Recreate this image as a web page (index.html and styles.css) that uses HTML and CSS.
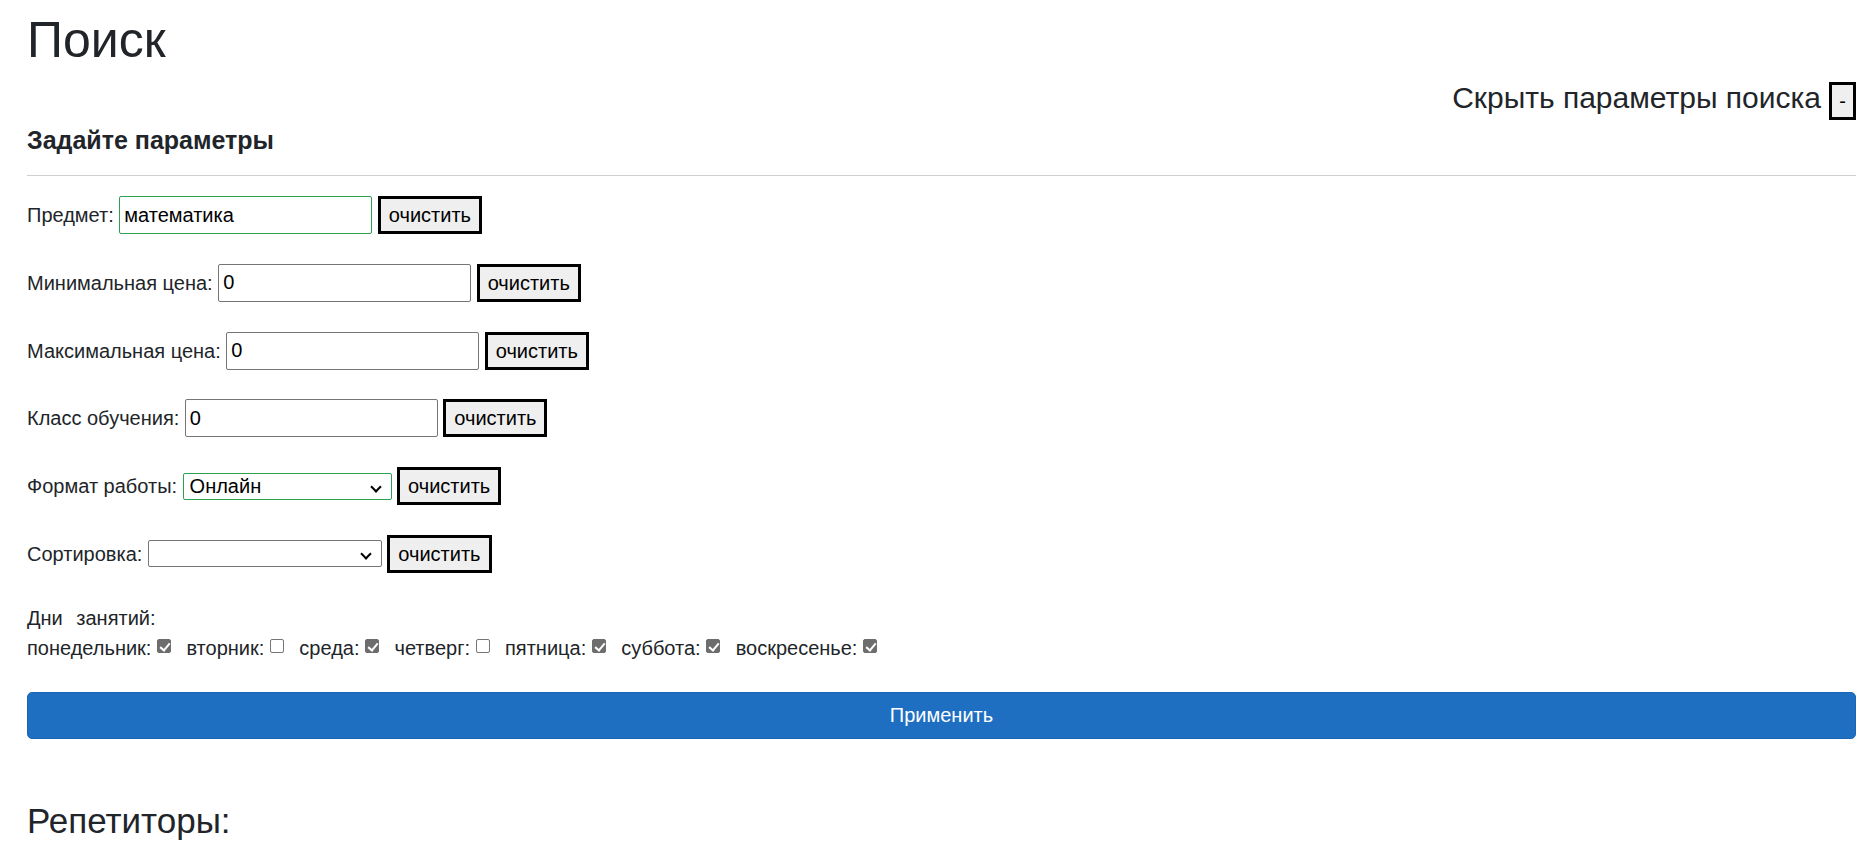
FILE: index.html
```html
<!DOCTYPE html>
<html lang="ru">
<head>
<meta charset="utf-8">
<title>Поиск</title>
<link rel="stylesheet" href="styles.css">
</head>
<body>
<div class="page">
  <h1 class="title">Поиск</h1>
  <div class="toggle">Скрыть параметры поиска <button type="button" class="btn-plain btn-small">-</button></div>
  <h5 class="section-title">Задайте параметры</h5>
  <hr class="divider">
  <form class="filters">
    <div class="field"><label>Предмет:</label><input class="text-input valid" type="text" value="математика"><button type="button" class="btn-plain">очистить</button></div>
    <div class="field"><label>Минимальная цена:</label><input class="text-input" type="text" value="0"><button type="button" class="btn-plain">очистить</button></div>
    <div class="field"><label>Максимальная цена:</label><input class="text-input" type="text" value="0"><button type="button" class="btn-plain">очистить</button></div>
    <div class="field"><label>Класс обучения:</label><input class="text-input" type="text" value="0"><button type="button" class="btn-plain">очистить</button></div>
    <div class="field"><label>Формат работы:</label><span class="select-wrap"><select class="select select-format valid"><option>Онлайн</option><option>Оффлайн</option></select></span><button type="button" class="btn-plain">очистить</button></div>
    <div class="field"><label>Сортировка:</label><span class="select-wrap"><select class="select select-sort"><option></option><option>по цене (возрастание)</option></select></span><button type="button" class="btn-plain">очистить</button></div>
    <div class="days">
      <div class="days-title">Дни <span class="days-title-2">занятий:</span></div>
      <div class="days-list"><span>понедельник:</span><input class="cb" type="checkbox" checked disabled><span class="day">вторник:</span><input class="cb" type="checkbox" disabled><span class="day">среда:</span><input class="cb" type="checkbox" checked disabled><span class="day">четверг:</span><input class="cb" type="checkbox" disabled><span class="day">пятница:</span><input class="cb" type="checkbox" checked disabled><span class="day">суббота:</span><input class="cb" type="checkbox" checked disabled><span class="day">воскресенье:</span><input class="cb" type="checkbox" checked disabled></div>
    </div>
    <button type="button" class="btn-apply">Применить</button>
  </form>
  <h3 class="results-title">Репетиторы:</h3>
</div>
</body>
</html>
```
FILE: styles.css
```css
* {
  box-sizing: border-box;
}

html, body {
  margin: 0;
  background: #fff;
}

body {
  font-family: "Liberation Sans", Arial, sans-serif;
  font-size: 20px;
  line-height: 1.5;
  color: #212529;
}

.page {
  padding: 10px 17px 0 27px;
}

.title {
  margin: 0 0 10px;
  font-size: 50px;
  font-weight: 400;
  line-height: 1.2;
}

.toggle {
  text-align: right;
  font-size: 30px;
  line-height: 36px;
}

.btn-plain {
  font-family: "Liberation Sans", Arial, sans-serif;
  font-size: 20px;
  font-weight: 400;
  line-height: 30px;
  height: 38px;
  padding: 1px 8px;
  margin: 0;
  border: 3px solid #000;
  border-radius: 0;
  background: #efefef;
  color: #000;
  vertical-align: baseline;
}

.btn-small {
  padding: 1px 7px;
}

.section-title {
  margin: 5px 0 10px;
  font-size: 25px;
  font-weight: 700;
  line-height: 1.2;
}

.divider {
  margin: 20px 0;
  height: 0;
  border: 0;
  border-top: 1px solid #cfcfcf;
}

.filters {
  margin: 0;
}

.field {
  display: flex;
  align-items: center;
  gap: 5.5px;
  height: 38px;
  margin-bottom: 29.75px;
  line-height: 30px;
}

.text-input {
  width: 253px;
  height: 38px;
  margin: 0;
  padding: 0 4px;
  border: 1px solid #767676;
  border-radius: 2px;
  font-family: "Liberation Sans", Arial, sans-serif;
  font-size: 20px;
  color: #000;
  background: #fff;
}

.text-input.valid,
.select.valid {
  border: 1.5px solid #2f9f50;
}

.select-wrap {
  position: relative;
  display: inline-block;
  height: 27px;
}

.select-wrap::after {
  content: "";
  position: absolute;
  right: 12px;
  top: 10px;
  width: 6px;
  height: 6px;
  border-right: 2px solid #000;
  border-bottom: 2px solid #000;
  transform: rotate(45deg);
  pointer-events: none;
}

.select {
  -webkit-appearance: none;
  appearance: none;
  display: block;
  height: 27px;
  margin: 0;
  padding: 0 26px 0 6px;
  border: 1px solid #767676;
  border-radius: 2px;
  background: #fff;
  font-family: "Liberation Sans", Arial, sans-serif;
  font-size: 20px;
  line-height: 23px;
  color: #000;
}

.select-format {
  width: 209px;
}

.select-sort {
  width: 234px;
}

.days {
  margin-bottom: 29px;
  line-height: 30px;
}

.days-title-2 {
  margin-left: 8px;
}

.days-list {
  white-space: nowrap;
}

.cb {
  -webkit-appearance: none;
  appearance: none;
  position: relative;
  display: inline-block;
  width: 14px;
  height: 14px;
  margin: 0 0 1.5px 5.5px;
  vertical-align: baseline;
  border: 1px solid #767676;
  border-radius: 2px;
  background: #fff;
}

.cb:checked {
  background: #6d6d6d;
  border-color: #6d6d6d;
}

.cb:checked::after {
  content: "";
  position: absolute;
  left: 4px;
  top: 1px;
  width: 4px;
  height: 8px;
  border-right: 2px solid #fff;
  border-bottom: 2px solid #fff;
  transform: rotate(40deg);
}

.day {
  margin-left: 15.5px;
}

.btn-apply {
  display: block;
  width: 100%;
  height: 47.5px;
  margin: 0;
  padding: 7.5px 15px;
  border: 1px solid #1b66b4;
  border-radius: 5px;
  background: #1e6fc1;
  color: #fff;
  font-family: "Liberation Sans", Arial, sans-serif;
  font-size: 20px;
  line-height: 30px;
  text-align: center;
}

.results-title {
  margin: 61px 0 10px;
  font-size: 35px;
  font-weight: 400;
  line-height: 1.2;
}
```
